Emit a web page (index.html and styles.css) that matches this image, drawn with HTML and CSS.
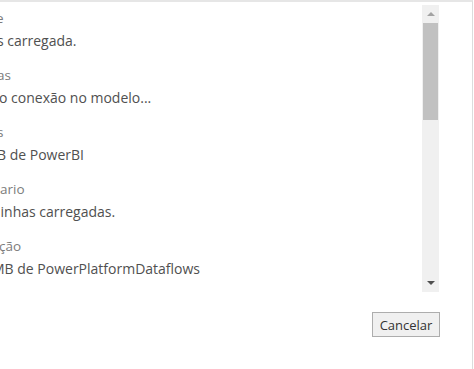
FILE: index.html
```html
<!DOCTYPE html>
<html lang="pt">

<head>
  <meta charset="UTF-8">
  <meta name="viewport" content="width=device-width, initial-scale=1.0">
  <title>Carregar</title>
  <link rel="stylesheet" href="styles.css">
</head>

<body>
  <div class="dialog">
    <div class="content">
      <ul class="list">
        <li class="item">
          <p class="label cut-4">e</p>
          <p class="value cut-3">s carregada.</p>
        </li>
        <li class="item">
          <p class="label cut-3">as</p>
          <p class="value cut-1">o conexão no modelo...</p>
        </li>
        <li class="item">
          <p class="label cut-3">s</p>
          <p class="value cut-3">B de PowerBI</p>
        </li>
        <li class="item">
          <p class="label">ario</p>
          <p class="value cut-3">linhas carregadas.</p>
        </li>
        <li class="item">
          <p class="label cut-1">ção</p>
          <p class="value cut-8">MB de PowerPlatformDataflows</p>
        </li>
      </ul>

      <!-- barra de rolagem -->
      <div class="scrollbar">
        <div class="arrow arrow-up"></div>
        <div class="thumb"></div>
        <div class="track"></div>
        <div class="arrow arrow-down"></div>
      </div>
    </div>

    <div class="footer">
      <button class="btn">Cancelar</button>
    </div>
  </div>
</body>

</html>
```

FILE: styles.css
```css
* {
  margin: 0;
  padding: 0;
  box-sizing: border-box;
  list-style: none;
}

body {
  width: 474px;
  height: 369px;
  background: #fff;
  font-family: "Open Sans", "Noto Sans", sans-serif;
  overflow: hidden;
}

.dialog {
  width: 473px;
  height: 369px;
  border-top: 2px solid #e6e6e6;
  border-right: 1px solid #dcdcdc;
  display: flex;
  flex-direction: column;
}

.content {
  display: flex;
  padding: 3px 33px 0 0;
  height: 290px;
}

/* lista de consultas */
.list {
  flex: 1;
  overflow: hidden;
  padding-top: 3px;
}

.item {
  margin-bottom: 12px;
}

.label {
  font-size: 13.5px;
  line-height: 20px;
  color: #7c7c7c;
  white-space: nowrap;
}

.value {
  font-size: 14px;
  line-height: 25px;
  color: #505050;
  white-space: nowrap;
}

.cut-1 {
  text-indent: -1px;
}

.cut-3 {
  text-indent: -3px;
}

.cut-4 {
  text-indent: -4px;
}

.cut-8 {
  text-indent: -8px;
}

/* barra de rolagem desenhada */
.scrollbar {
  width: 17px;
  background: #f0f0f0;
  display: flex;
  flex-direction: column;
  align-items: center;
}

.arrow {
  height: 18px;
  width: 100%;
  display: flex;
  align-items: center;
  justify-content: center;
}

.arrow::after {
  content: "";
  border-left: 4px solid transparent;
  border-right: 4px solid transparent;
}

.arrow-up::after {
  border-bottom: 4px solid #a3a3a3;
}

.arrow-down::after {
  border-top: 4px solid #505050;
}

.thumb {
  width: 15px;
  height: 97px;
  background: #c1c1c1;
}

.track {
  flex: 1;
}

.footer {
  display: flex;
  justify-content: flex-end;
  padding: 20px 32px 0 0;
}

.btn {
  width: 68px;
  height: 25px;
  font-family: "Open Sans", "Noto Sans", sans-serif;
  font-size: 13px;
  color: #333;
  background: #f0f0f0;
  border: 1px solid #adadad;
}
```
